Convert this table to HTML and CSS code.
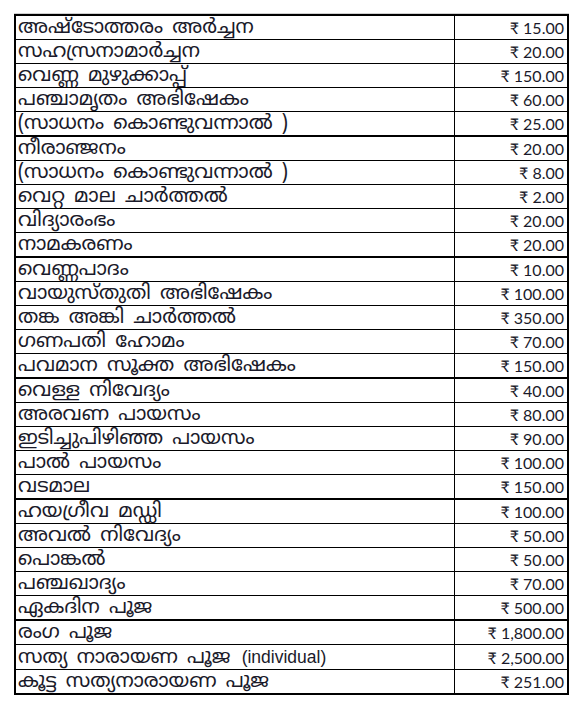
FILE: index.html
```html
<!DOCTYPE html>
<html lang="ml">
<head>
<meta charset="utf-8">
<title>Pooja Rates</title>
<link rel="stylesheet" href="styles.css">
</head>
<body>
<table class="rates">
<tbody>
<tr><td class="name">അഷ്ടോത്തരം അർച്ചന</td><td class="price">₹ 15.00</td></tr>
<tr><td class="name">സഹസ്രനാമാർച്ചന</td><td class="price">₹ 20.00</td></tr>
<tr><td class="name">വെണ്ണ മുഴുക്കാപ്പ്</td><td class="price">₹ 150.00</td></tr>
<tr><td class="name">പഞ്ചാമൃതം അഭിഷേകം</td><td class="price">₹ 60.00</td></tr>
<tr class="group-end"><td class="name">(സാധനം കൊണ്ടുവന്നാൽ )</td><td class="price">₹ 25.00</td></tr>
<tr><td class="name">നീരാഞ്ജനം</td><td class="price">₹ 20.00</td></tr>
<tr><td class="name">(സാധനം കൊണ്ടുവന്നാൽ )</td><td class="price">₹ 8.00</td></tr>
<tr><td class="name">വെറ്റ മാല ചാർത്തൽ</td><td class="price">₹ 2.00</td></tr>
<tr><td class="name">വിദ്യാരംഭം</td><td class="price">₹ 20.00</td></tr>
<tr class="group-end"><td class="name">നാമകരണം</td><td class="price">₹ 20.00</td></tr>
<tr><td class="name">വെണ്ണപാദം</td><td class="price">₹ 10.00</td></tr>
<tr><td class="name">വായുസ്തുതി അഭിഷേകം</td><td class="price">₹ 100.00</td></tr>
<tr><td class="name">തങ്ക അങ്കി ചാർത്തൽ</td><td class="price">₹ 350.00</td></tr>
<tr><td class="name">ഗണപതി ഹോമം</td><td class="price">₹ 70.00</td></tr>
<tr class="group-end"><td class="name">പവമാന സൂക്ത അഭിഷേകം</td><td class="price">₹ 150.00</td></tr>
<tr><td class="name">വെള്ള നിവേദ്യം</td><td class="price">₹ 40.00</td></tr>
<tr><td class="name">അരവണ പായസം</td><td class="price">₹ 80.00</td></tr>
<tr><td class="name">ഇടിച്ചുപിഴിഞ്ഞ പായസം</td><td class="price">₹ 90.00</td></tr>
<tr><td class="name">പാൽ പായസം</td><td class="price">₹ 100.00</td></tr>
<tr class="group-end"><td class="name">വടമാല</td><td class="price">₹ 150.00</td></tr>
<tr><td class="name">ഹയഗ്രീവ മഡ്ഡി</td><td class="price">₹ 100.00</td></tr>
<tr><td class="name">അവൽ നിവേദ്യം</td><td class="price">₹ 50.00</td></tr>
<tr><td class="name">പൊങ്കൽ</td><td class="price">₹ 50.00</td></tr>
<tr><td class="name">പഞ്ചഖാദ്യം</td><td class="price">₹ 70.00</td></tr>
<tr class="group-end"><td class="name">ഏകദിന പൂജ</td><td class="price">₹ 500.00</td></tr>
<tr><td class="name">രംഗ പൂജ</td><td class="price">₹ 1,800.00</td></tr>
<tr><td class="name">സത്യ നാരായണ പൂജ <span class="latin">(individual)</span></td><td class="price">₹ 2,500.00</td></tr>
<tr><td class="name">കൂട്ട സത്യനാരായണ പൂജ</td><td class="price">₹ 251.00</td></tr>
</tbody>
</table>
</body>
</html>
```

FILE: styles.css
```css
html, body {
  margin: 0;
  padding: 0;
  background: #ffffff;
}

body {
  padding: 14px 0 0 14px;
}

.rates {
  border-collapse: collapse;
  width: 555px;
  border: 2px solid #000;
  box-shadow: 0 -1px 0 #d0d0d0;
  table-layout: fixed;
}

.rates td {
  height: 23px;
  padding: 0;
  border-top: 1px solid #000;
  border-bottom: 1px solid #000;
  vertical-align: middle;
  white-space: nowrap;
  overflow: hidden;
  color: #1a1a2a;
}

.rates tr.group-end td {
  border-bottom: 2px solid #000;
}

.name {
  width: 436px;
  padding: 2px 0 0 2px !important;
  height: 21px !important;
  font-family: "Noto Sans Malayalam", "Noto Sans", "DejaVu Sans", sans-serif;
  font-size: 20px;
  line-height: 21px;
  word-spacing: 3px;
  border-right: 1px solid #000;
}

.latin {
  font-family: "Liberation Sans", Arial, sans-serif;
  font-size: 17.5px;
  word-spacing: 0;
  margin-left: 2px;
}

.price {
  text-align: right;
  padding-right: 3px !important;
  font-family: Lato, "Open Sans", sans-serif;
  font-size: 16px;
  line-height: 23px;
  color: #111;
}
```
